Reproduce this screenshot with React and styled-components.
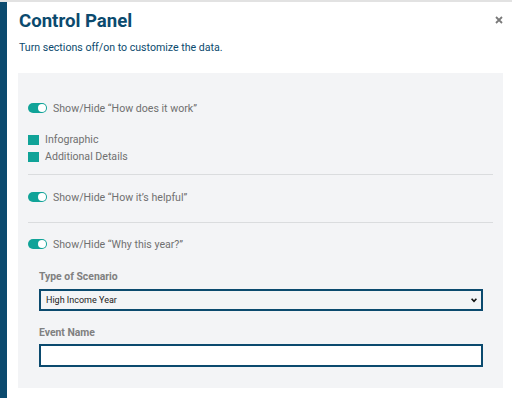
import React from "react";
import styled, { createGlobalStyle } from "styled-components";

const Global = createGlobalStyle`
  html, body { margin: 0; padding: 0; background: #fff; }
  body { font-family: Roboto, "Liberation Sans", Arial, sans-serif; }
  * { box-sizing: border-box; }
`;

const Page = styled.div`
  display: flex;
  width: 512px;
  height: 398px;
  border-top: 2px solid #e2e2e2;
  overflow: hidden;
`;

const SideBar = styled.div`
  width: 7px;
  flex: none;
  background: #0b4a6e;
`;

const Content = styled.div`
  flex: 1;
  padding: 7px 9px 0 11px;
  display: flex;
  flex-direction: column;
`;

const Header = styled.div`
  display: flex;
  justify-content: space-between;
  align-items: flex-start;
`;

const Title = styled.h1`
  margin: 0;
  font-size: 18.6px;
  line-height: 24px;
  font-weight: 700;
  color: #0b4a6e;
  padding-left: 1px;
`;

const CloseButton = styled.button`
  border: 0;
  background: none;
  padding: 0;
  margin-top: 7px;
  width: 8px;
  height: 8px;
  display: flex;
  cursor: pointer;
`;

const Subtitle = styled.p`
  margin: 7px 0 0;
  font-size: 10.6px;
  line-height: 16px;
  color: #0b4a6e;
  padding-left: 1px;
`;

const Panel = styled.div`
  margin-top: 17px;
  background: #f3f4f6;
  padding: 28px 10px 21px 10px;
  display: flex;
  flex-direction: column;
`;

const ToggleRow = styled.div`
  display: flex;
  align-items: center;
  gap: 6px;
  height: 14px;
  margin-top: ${(p) => p.$mt || 0}px;
  font-size: 10.6px;
  color: #707070;
`;

const Switch = styled.span`
  position: relative;
  width: 19px;
  height: 10px;
  border-radius: 5px;
  background: #10a398;
  flex: none;
  &::after {
    content: "";
    position: absolute;
    right: 1px;
    top: 1px;
    width: 8px;
    height: 8px;
    border-radius: 50%;
    background: #fff;
  }
`;

const CheckList = styled.div`
  margin-top: 16px;
  display: flex;
  flex-direction: column;
`;

const CheckItem = styled.div`
  display: flex;
  align-items: center;
  gap: 6px;
  height: 17px;
  font-size: 10.6px;
  color: #707070;
`;

const Square = styled.span`
  width: 11px;
  height: 10px;
  background: #10a398;
  flex: none;
`;

const Divider = styled.hr`
  margin: ${(p) => p.$mt}px 0 0;
  border: 0;
  height: 1px;
  background: #dadcde;
`;

const Form = styled.div`
  padding: 0 10px 0 11px;
  display: flex;
  flex-direction: column;
`;

const FieldLabel = styled.label`
  font-size: 10.4px;
  line-height: 14px;
  font-weight: 700;
  color: #808080;
  margin-top: ${(p) => p.$mt}px;
`;

const SelectWrap = styled.div`
  position: relative;
  margin-top: 5px;
  display: flex;
`;

const Select = styled.select`
  flex: 1;
  height: 22px;
  border: 2px solid #0b4a6e;
  border-radius: 0;
  background: #f3f4f6;
  font-family: Roboto, "Liberation Sans", Arial, sans-serif;
  font-size: 9px;
  color: #222;
  padding: 0 5px;
  outline: none;
  appearance: none;
  -webkit-appearance: none;
`;

const Chevron = styled.svg`
  position: absolute;
  right: 6px;
  top: 9px;
  pointer-events: none;
`;

const Input = styled.input`
  margin-top: 4px;
  height: 23px;
  border: 2px solid #0b4a6e;
  border-radius: 0;
  background: #fff;
  outline: none;
`;

function Toggle({ label, mt }) {
  return (
    <ToggleRow $mt={mt}>
      <Switch />
      <span>{label}</span>
    </ToggleRow>
  );
}

export default function App() {
  return (
    <>
      <Global />
      <Page>
        <SideBar />
        <Content>
          <Header>
            <Title>Control Panel</Title>
            <CloseButton aria-label="close">
              <svg width="8" height="8" viewBox="0 0 8 8">
                <path d="M1 1L7 7M7 1L1 7" stroke="#7a7a7a" strokeWidth="1.8" />
              </svg>
            </CloseButton>
          </Header>
          <Subtitle>Turn sections off/on to customize the data.</Subtitle>
          <Panel>
            <Toggle label="Show/Hide “How does it work”" />
            <CheckList>
              <CheckItem>
                <Square />
                Infographic
              </CheckItem>
              <CheckItem>
                <Square />
                Additional Details
              </CheckItem>
            </CheckList>
            <Divider $mt={9} />
            <Toggle label="Show/Hide “How it’s helpful”" mt={15} />
            <Divider $mt={18} />
            <Toggle label="Show/Hide “Why this year?”" mt={14} />
            <Form>
              <FieldLabel $mt={19}>Type of Scenario</FieldLabel>
              <SelectWrap>
                <Select defaultValue="high">
                  <option value="high">High Income Year</option>
                  <option value="low">Low Income Year</option>
                </Select>
                <Chevron width="6" height="5" viewBox="0 0 6 5">
                  <path d="M0.6 0.8L3 3.4L5.4 0.8" stroke="#111" strokeWidth="1.6" fill="none" />
                </Chevron>
              </SelectWrap>
              <FieldLabel $mt={15}>Event Name</FieldLabel>
              <Input type="text" />
            </Form>
          </Panel>
        </Content>
      </Page>
    </>
  );
}
